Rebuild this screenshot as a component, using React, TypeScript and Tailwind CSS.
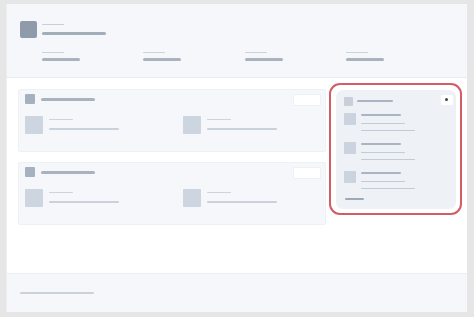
import React from "react";

const Bar = ({ w, h = 1, c = "bg-[#cbd2dc]", cls = "" }: { w: number; h?: number; c?: string; cls?: string }) => (
  <div className={`${c} rounded-full ${cls}`} style={{ width: w, height: h }} />
);

const Stat = () => (
  <div className="flex flex-col">
    <Bar w={22} h={1} c="bg-[#ccd2da]" />
    <Bar w={38} h={3} c="bg-[#a9b3c0]" cls="mt-[5px]" />
  </div>
);

const CardItem = () => (
  <div className="flex items-start">
    <div className="w-[18px] h-[18px] bg-[#cdd5e1] rounded-[1px]" />
    <div className="ml-[6px] mt-[3px] flex flex-col">
      <Bar w={24} h={1} c="bg-[#cdd3dc]" />
      <Bar w={70} h={2} c="bg-[#c9d1dd]" cls="mt-[8px]" />
    </div>
  </div>
);

const Card = () => (
  <div className="h-[63px] bg-[#f5f7fa] border border-[#eef1f4] rounded-[2px] pl-[6px] pr-[4px] pt-[4px]">
    <div className="flex items-start justify-between">
      <div className="flex items-center">
        <div className="w-[10px] h-[10px] bg-[#a6b1bf] rounded-[1px]" />
        <Bar w={54} h={3} c="bg-[#a9b3c0]" cls="ml-[6px]" />
      </div>
      <div className="w-[28px] h-[12px] bg-white border border-[#eef1f4] rounded-[1px]" />
    </div>
    <div className="flex mt-[10px]">
      <div className="w-[158px]">
        <CardItem />
      </div>
      <CardItem />
    </div>
  </div>
);

const PanelItem = () => (
  <div className="flex items-start">
    <div className="w-[12px] h-[12px] bg-[#cbd3de] rounded-[1px]" />
    <div className="ml-[5px] mt-[1px] flex flex-col">
      <Bar w={40} h={2} c="bg-[#aab4c2]" />
      <Bar w={44} h={1} c="bg-[#c3cbd6]" cls="mt-[7px]" />
      <Bar w={54} h={1} c="bg-[#c3cbd6]" cls="mt-[6px]" />
    </div>
  </div>
);

export default function App() {
  return (
    <div className="w-[474px] h-[317px] bg-[#e6e6e6] pt-[4px] pl-[6px] overflow-hidden">
      <div className="w-[461px] h-[308px] bg-white flex flex-col border-l border-[#eeeeee]">
        {/* header */}
        <div className="h-[74px] bg-[#f5f7fa] border-b border-[#e9ecf0] pl-[13px] pt-[17px]">
          <div className="flex items-start">
            <div className="w-[17px] h-[17px] bg-[#8f9bab] rounded-[2px]" />
            <div className="ml-[5px] mt-[3px] flex flex-col">
              <Bar w={22} h={1} c="bg-[#c9cfd8]" />
              <Bar w={64} h={3} c="bg-[#a3adbb]" cls="mt-[7px]" />
            </div>
          </div>
          <div className="grid grid-cols-[101px_102px_101px_101px] ml-[22px] mt-[14px]">
            <Stat />
            <Stat />
            <Stat />
            <Stat />
          </div>
        </div>

        {/* main */}
        <div className="flex-1 flex items-start pl-[11px]">
          <div className="w-[308px] mt-[11px] flex flex-col gap-[10px]">
            <Card />
            <Card />
          </div>
          <div className="ml-[3px] mt-[5px] w-[133px] border-2 border-[#d35c65] rounded-[11px] p-[4.5px]">
            <div className="h-[119px] bg-[#eef2f6] rounded-[7px] pl-[8px] pr-[3px] pt-[5px] flex flex-col">
              <div className="flex items-start justify-between">
                <div className="flex items-center mt-[2px]">
                  <div className="w-[9px] h-[9px] bg-[#c8cfd9] rounded-[1px]" />
                  <Bar w={36} h={2} c="bg-[#a9b3c1]" cls="ml-[4px]" />
                </div>
                <div className="w-[12px] h-[10px] bg-white rounded-[1px] flex items-center justify-center">
                  <div className="w-[3px] h-[3px] rounded-full bg-[#3b4452]" />
                </div>
              </div>
              <div className="flex flex-col gap-[11px] mt-[7px]">
                <PanelItem />
                <PanelItem />
                <PanelItem />
              </div>
              <Bar w={19} h={2} c="bg-[#9ea9b8]" cls="mt-[9px] ml-[1px]" />
            </div>
          </div>
        </div>

        {/* footer */}
        <div className="h-[39px] bg-[#f5f7fa] border-t border-[#eceff3] pl-[13px] pt-[18px]">
          <Bar w={74} h={2} c="bg-[#cad2dc]" />
        </div>
      </div>
    </div>
  );
}
